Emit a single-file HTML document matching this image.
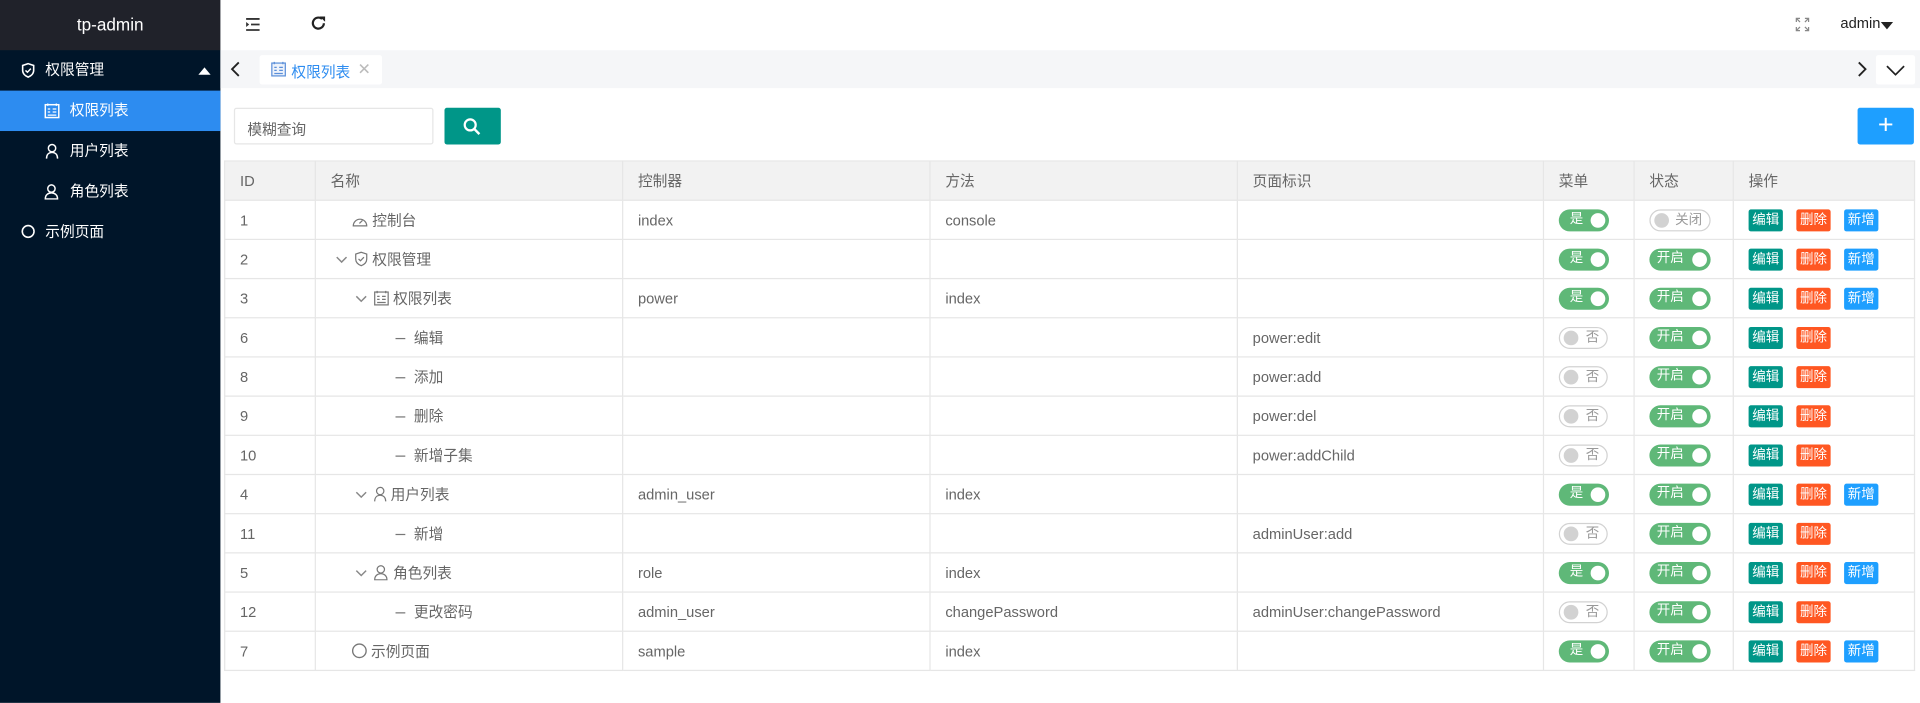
<!DOCTYPE html>
<html><head><meta charset="utf-8"><style>
*{margin:0;padding:0;box-sizing:border-box}
html,body{width:1920px;height:703px;overflow:hidden;background:#fff}
#w{width:1568px;height:574px;position:relative;transform:scale(1.2245);transform-origin:0 0;font-family:"Liberation Sans","Noto Sans CJK SC",sans-serif;font-size:12px;color:#666}
.side{position:absolute;left:0;top:0;width:180px;height:574px;background:#001529}
.logo{height:41px;background:#20222a;color:#fff;font-size:14px;text-align:center;line-height:40px}
.mi{height:33px;line-height:33px;color:#fff;font-size:12px;position:relative}
.mi svg{position:absolute;top:10px}
.act{background:#2d8cf0}
.hdr{position:absolute;left:180px;top:0;right:0;height:41px;background:#fff}
.tabs{position:absolute;left:180px;top:41px;right:0;height:31px;background:#f5f6f8}
.abs{position:absolute}
table{position:absolute;left:183px;top:131px;width:1380px;border-collapse:collapse;table-layout:fixed}
td,th{border:1px solid #e6e6e6;height:32px;padding:0 0 0 12px;font-weight:normal;text-align:left;white-space:nowrap;font-size:12px;color:#666}
th{background:#f2f2f2}
.sw{display:inline-block;height:18px;border-radius:10px;position:relative;vertical-align:middle;font-size:11px;line-height:17px;color:#fff}
.on{background:#5fb878}
.off{background:#fff;border:1px solid #d2d2d2;color:#999}
.on i{position:absolute;right:3px;top:3px;width:12px;height:12px;border-radius:50%;background:#fff}
.off i{position:absolute;left:3px;top:2px;width:12px;height:12px;border-radius:50%;background:#d2d2d2}
.b{display:inline-block;width:28px;height:18px;line-height:18px;text-align:center;color:#fff;font-size:11px;border-radius:2px;margin-right:11px;vertical-align:middle}
.g{background:#009688}.r{background:#ff5722}.bl{background:#1e9fff}
.nm{display:inline-flex;align-items:center;gap:3px;vertical-align:middle}
.ar{width:14px;height:10px}
.ds{display:inline-block;width:8px;height:1px;background:#777;margin-right:7px;vertical-align:middle}
</style></head><body><div id="w">
<div class="side">
<div class="logo">tp-admin</div>
<div class="mi"><svg style="left:17px" width="12" height="13" viewBox="0 0 12 13"><path d="M6 1L1.5 2.5V6.5C1.5 9 3.5 11 6 12C8.5 11 10.5 9 10.5 6.5V2.5Z" fill="none" stroke="#fff" stroke-width="1.3"/><path d="M3.8 6.5L5.4 8L8.2 5" fill="none" stroke="#fff" stroke-width="1.2"/></svg><span style="margin-left:37px">权限管理</span><span class="abs" style="right:8px;top:14px;width:0;height:0;border-left:5px solid transparent;border-right:5px solid transparent;border-bottom:6px solid #fff"></span></div>
<div class="mi act"><svg style="left:36px" width="13" height="13" viewBox="0 0 13 13"><rect x="1" y="1.5" width="11" height="10.5" fill="none" stroke="#fff" stroke-width="1.2"/><path d="M3 0.5v2M10 0.5v2M3 5h2M3 7.5h2M7 5h3M7 7.5h3M3 10h7" stroke="#fff" stroke-width="1"/></svg><span style="margin-left:57px">权限列表</span></div>
<div class="mi"><svg style="left:37px" width="11" height="13" viewBox="0 0 11 13"><circle cx="5.5" cy="4" r="3" fill="none" stroke="#fff" stroke-width="1.2"/><path d="M1 12.5C1 9 3 7.5 5.5 7.5S10 9 10 12.5" fill="none" stroke="#fff" stroke-width="1.2"/></svg><span style="margin-left:57px">用户列表</span></div>
<div class="mi"><svg style="left:36px" width="13" height="13" viewBox="0 0 13 13"><circle cx="6" cy="4" r="3" fill="none" stroke="#fff" stroke-width="1.2"/><path d="M1 12.5C1 9 3.5 7.5 6 7.5S11 9 11 12.5Z" fill="none" stroke="#fff" stroke-width="1.2"/></svg><span style="margin-left:57px">角色列表</span></div>
<div class="mi"><svg style="left:17px" width="12" height="12" viewBox="0 0 12 12"><circle cx="6" cy="6" r="4.8" fill="none" stroke="#fff" stroke-width="1.3"/></svg><span style="margin-left:37px">示例页面</span></div>
</div>
<div class="hdr">
<svg class="abs" style="left:20px;top:14px" width="13" height="12" viewBox="0 0 13 12"><path d="M1 1.5h11M5 6h7M1 10.5h11" stroke="#333" stroke-width="1.5"/><path d="M1 4l2.5 2L1 8z" fill="#333"/></svg>
<svg class="abs" style="left:73px;top:12px" width="14" height="14" viewBox="0 0 14 14"><path d="M11.5 7A4.5 4.5 0 1 1 10 3.5" fill="none" stroke="#222" stroke-width="1.8"/><path d="M8 1.5h4.5v4.3z" fill="#222"/></svg>
<svg class="abs" style="left:1286px;top:14px" width="12" height="12" viewBox="0 0 12 12" stroke="#888" stroke-width="1" fill="none"><path d="M1 4V1h3M1 1l3 3M8 1h3v3M11 1L8 4M1 8v3h3M1 11l3-3M11 8v3H8M11 11L8 8"/></svg>
<span class="abs" style="left:1323px;top:12px;font-size:12px;color:#222">admin</span>
<span class="abs" style="left:1356px;top:18px;width:0;height:0;border-left:5px solid transparent;border-right:5px solid transparent;border-top:6px solid #222"></span>
</div>
<div class="tabs">
<svg class="abs" style="left:8px;top:9px" width="8" height="13" viewBox="0 0 8 13"><path d="M7 1L1.5 6.5L7 12" fill="none" stroke="#222" stroke-width="1.5"/></svg>
<div class="abs" style="left:32px;top:4px;width:100px;height:24px;background:#fff;border-radius:2px">
<svg class="abs" style="left:9px;top:5px" width="13" height="13" viewBox="0 0 13 13"><rect x="1" y="1.5" width="11" height="10.5" fill="#eef3fb" stroke="#5b8fd9" stroke-width="1"/><path d="M3 0.5v2M10 0.5v2M3 5h2M3 7.5h2M7 5h3M7 7.5h3M3 10h7" stroke="#5b8fd9" stroke-width="1"/></svg>
<span class="abs" style="left:26px;top:5px;color:#2d8cf0">权限列表</span>
<span class="abs" style="left:80px;top:4px;color:#bbb;font-size:13px">✕</span></div>
<svg class="abs" style="left:1337px;top:9px" width="8" height="13" viewBox="0 0 8 13"><path d="M1 1L6.5 6.5L1 12" fill="none" stroke="#222" stroke-width="1.5"/></svg>
<div class="abs" style="left:1352px;top:4px;width:32px;height:24px;background:#fff;border-radius:2px"><svg class="abs" style="left:8px;top:8px" width="16" height="9" viewBox="0 0 16 9"><path d="M1 1l7 7 7-7" fill="none" stroke="#222" stroke-width="1.4"/></svg></div>
</div>
<div class="abs" style="left:191px;top:88px;width:163px;height:30px;border:1px solid #e6e6e6;border-radius:2px;padding:8px 0 0 10px;color:#666">模糊查询</div>
<div class="abs" style="left:363px;top:88px;width:46px;height:30px;background:#009688;border-radius:2px"><svg class="abs" style="left:15px;top:8px" width="15" height="15" viewBox="0 0 15 15"><circle cx="6" cy="6" r="4.5" fill="none" stroke="#fff" stroke-width="1.8"/><path d="M9.5 9.5L13.5 13.5" stroke="#fff" stroke-width="2"/></svg></div>
<div class="abs" style="left:1517px;top:88px;width:46px;height:30px;background:#1e9fff;border-radius:2px;color:#fff;font-size:22px;text-align:center;line-height:28px">+</div>
<table>
<colgroup><col style="width:74px"><col style="width:251px"><col style="width:251px"><col style="width:251px"><col style="width:250px"><col style="width:74px"><col style="width:81px"><col style="width:148px"></colgroup>
<tr><th>ID</th><th>名称</th><th>控制器</th><th>方法</th><th>页面标识</th><th>菜单</th><th>状态</th><th>操作</th></tr>
<tr><td>1</td><td><span class="nm" style="margin-left:17px"><svg width="14" height="12" viewBox="0 0 14 12"><path d="M1.5 10.5A5.5 5.5 0 1 1 12.5 10.5Z" fill="none" stroke="#777" stroke-width="1"/><path d="M6.5 8.5L9 6" stroke="#777" stroke-width="1"/></svg>控制台</span></td><td>index</td><td>console</td><td></td><td><span class="sw on" style="width:41px;padding-left:9px">是<i></i></span></td><td><span class="sw off" style="width:50px;padding-left:20px">关闭<i></i></span></td><td><span class="b g">编辑</span><span class="b r">删除</span><span class="b bl">新增</span></td></tr>
<tr><td>2</td><td><span class="nm" style="margin-left:2px"><svg class="ar" viewBox="0 0 14 10"><path d="M3 3l4 4 4-4" fill="none" stroke="#888" stroke-width="1.2"/></svg><svg width="12" height="13" viewBox="0 0 12 13"><path d="M6 1L1.5 2.5V6.5C1.5 9 3.5 11 6 12C8.5 11 10.5 9 10.5 6.5V2.5Z" fill="none" stroke="#777" stroke-width="1"/><path d="M3.8 6.5L5.4 8L8.2 5" fill="none" stroke="#777" stroke-width="1"/></svg>权限管理</span></td><td></td><td></td><td></td><td><span class="sw on" style="width:41px;padding-left:9px">是<i></i></span></td><td><span class="sw on" style="width:50px;padding-left:6px">开启<i></i></span></td><td><span class="b g">编辑</span><span class="b r">删除</span><span class="b bl">新增</span></td></tr>
<tr><td>3</td><td><span class="nm" style="margin-left:18px"><svg class="ar" viewBox="0 0 14 10"><path d="M3 3l4 4 4-4" fill="none" stroke="#888" stroke-width="1.2"/></svg><svg width="13" height="13" viewBox="0 0 13 13"><rect x="1" y="1.5" width="11" height="10.5" fill="none" stroke="#777" stroke-width="1"/><path d="M3 0.5v2M10 0.5v2M3 5h2M3 7.5h2M7 5h3M7 7.5h3M3 10h7" stroke="#777" stroke-width="1"/></svg>权限列表</span></td><td>power</td><td>index</td><td></td><td><span class="sw on" style="width:41px;padding-left:9px">是<i></i></span></td><td><span class="sw on" style="width:50px;padding-left:6px">开启<i></i></span></td><td><span class="b g">编辑</span><span class="b r">删除</span><span class="b bl">新增</span></td></tr>
<tr><td>6</td><td><span style="margin-left:53px"><i class="ds"></i>编辑</span></td><td></td><td></td><td>power:edit</td><td><span class="sw off" style="width:40px;padding-left:21px">否<i></i></span></td><td><span class="sw on" style="width:50px;padding-left:6px">开启<i></i></span></td><td><span class="b g">编辑</span><span class="b r">删除</span></td></tr>
<tr><td>8</td><td><span style="margin-left:53px"><i class="ds"></i>添加</span></td><td></td><td></td><td>power:add</td><td><span class="sw off" style="width:40px;padding-left:21px">否<i></i></span></td><td><span class="sw on" style="width:50px;padding-left:6px">开启<i></i></span></td><td><span class="b g">编辑</span><span class="b r">删除</span></td></tr>
<tr><td>9</td><td><span style="margin-left:53px"><i class="ds"></i>删除</span></td><td></td><td></td><td>power:del</td><td><span class="sw off" style="width:40px;padding-left:21px">否<i></i></span></td><td><span class="sw on" style="width:50px;padding-left:6px">开启<i></i></span></td><td><span class="b g">编辑</span><span class="b r">删除</span></td></tr>
<tr><td>10</td><td><span style="margin-left:53px"><i class="ds"></i>新增子集</span></td><td></td><td></td><td>power:addChild</td><td><span class="sw off" style="width:40px;padding-left:21px">否<i></i></span></td><td><span class="sw on" style="width:50px;padding-left:6px">开启<i></i></span></td><td><span class="b g">编辑</span><span class="b r">删除</span></td></tr>
<tr><td>4</td><td><span class="nm" style="margin-left:18px"><svg class="ar" viewBox="0 0 14 10"><path d="M3 3l4 4 4-4" fill="none" stroke="#888" stroke-width="1.2"/></svg><svg width="11" height="13" viewBox="0 0 11 13"><circle cx="5.5" cy="4" r="3" fill="none" stroke="#777" stroke-width="1"/><path d="M1 12.5C1 9 3 7.5 5.5 7.5S10 9 10 12.5" fill="none" stroke="#777" stroke-width="1"/></svg>用户列表</span></td><td>admin_user</td><td>index</td><td></td><td><span class="sw on" style="width:41px;padding-left:9px">是<i></i></span></td><td><span class="sw on" style="width:50px;padding-left:6px">开启<i></i></span></td><td><span class="b g">编辑</span><span class="b r">删除</span><span class="b bl">新增</span></td></tr>
<tr><td>11</td><td><span style="margin-left:53px"><i class="ds"></i>新增</span></td><td></td><td></td><td>adminUser:add</td><td><span class="sw off" style="width:40px;padding-left:21px">否<i></i></span></td><td><span class="sw on" style="width:50px;padding-left:6px">开启<i></i></span></td><td><span class="b g">编辑</span><span class="b r">删除</span></td></tr>
<tr><td>5</td><td><span class="nm" style="margin-left:18px"><svg class="ar" viewBox="0 0 14 10"><path d="M3 3l4 4 4-4" fill="none" stroke="#888" stroke-width="1.2"/></svg><svg width="13" height="13" viewBox="0 0 13 13"><circle cx="6" cy="4" r="3" fill="none" stroke="#777" stroke-width="1"/><path d="M1 12.5C1 9 3.5 7.5 6 7.5S11 9 11 12.5Z" fill="none" stroke="#777" stroke-width="1"/></svg>角色列表</span></td><td>role</td><td>index</td><td></td><td><span class="sw on" style="width:41px;padding-left:9px">是<i></i></span></td><td><span class="sw on" style="width:50px;padding-left:6px">开启<i></i></span></td><td><span class="b g">编辑</span><span class="b r">删除</span><span class="b bl">新增</span></td></tr>
<tr><td>12</td><td><span style="margin-left:53px"><i class="ds"></i>更改密码</span></td><td>admin_user</td><td>changePassword</td><td>adminUser:changePassword</td><td><span class="sw off" style="width:40px;padding-left:21px">否<i></i></span></td><td><span class="sw on" style="width:50px;padding-left:6px">开启<i></i></span></td><td><span class="b g">编辑</span><span class="b r">删除</span></td></tr>
<tr><td>7</td><td><span class="nm" style="margin-left:17px"><svg width="13" height="13" viewBox="0 0 13 13"><circle cx="6.5" cy="6.5" r="5.5" fill="none" stroke="#777" stroke-width="1.1"/></svg>示例页面</span></td><td>sample</td><td>index</td><td></td><td><span class="sw on" style="width:41px;padding-left:9px">是<i></i></span></td><td><span class="sw on" style="width:50px;padding-left:6px">开启<i></i></span></td><td><span class="b g">编辑</span><span class="b r">删除</span><span class="b bl">新增</span></td></tr>
</table>
</div></body></html>
